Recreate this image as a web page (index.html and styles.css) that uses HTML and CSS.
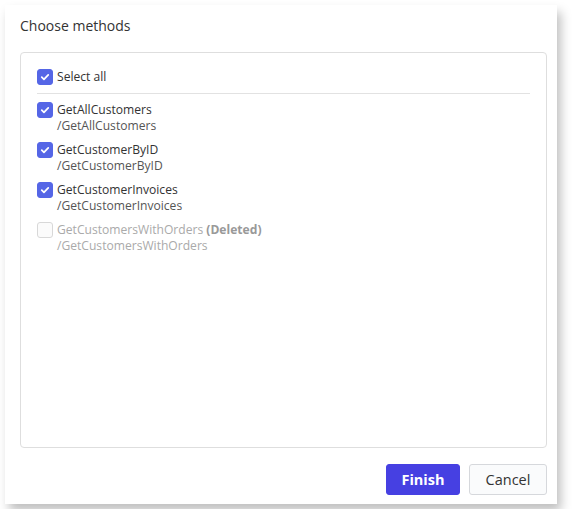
FILE: index.html
```html
<!DOCTYPE html>
<html>
<head>
<meta charset="utf-8">
<link rel="stylesheet" href="styles.css">
</head>
<body>
<div class="dialog">
  <div class="title">Choose methods</div>
  <div class="panel">
    <div class="row select-all">
      <span class="cb checked"><svg viewBox="0 0 16 16"><path d="M4.3 8.2l2.5 2.4 4.9-5" fill="none" stroke="#fff" stroke-width="2" stroke-linecap="round" stroke-linejoin="round"/></svg></span>
      <span class="label">Select all</span>
    </div>
    <div class="sep"></div>
    <div class="row item">
      <span class="cb checked"><svg viewBox="0 0 16 16"><path d="M4.3 8.2l2.5 2.4 4.9-5" fill="none" stroke="#fff" stroke-width="2" stroke-linecap="round" stroke-linejoin="round"/></svg></span>
      <div class="text"><div class="name">GetAllCustomers</div><div class="path">/GetAllCustomers</div></div>
    </div>
    <div class="row item">
      <span class="cb checked"><svg viewBox="0 0 16 16"><path d="M4.3 8.2l2.5 2.4 4.9-5" fill="none" stroke="#fff" stroke-width="2" stroke-linecap="round" stroke-linejoin="round"/></svg></span>
      <div class="text"><div class="name">GetCustomerByID</div><div class="path">/GetCustomerByID</div></div>
    </div>
    <div class="row item">
      <span class="cb checked"><svg viewBox="0 0 16 16"><path d="M4.3 8.2l2.5 2.4 4.9-5" fill="none" stroke="#fff" stroke-width="2" stroke-linecap="round" stroke-linejoin="round"/></svg></span>
      <div class="text"><div class="name">GetCustomerInvoices</div><div class="path">/GetCustomerInvoices</div></div>
    </div>
    <div class="row item disabled">
      <span class="cb"></span>
      <div class="text"><div class="name">GetCustomersWithOrders <b>(Deleted)</b></div><div class="path">/GetCustomersWithOrders</div></div>
    </div>
  </div>
  <div class="footer">
    <button class="btn primary">Finish</button>
    <button class="btn secondary">Cancel</button>
  </div>
</div>
</body>
</html>
```
FILE: styles.css
```css
html, body { margin: 0; padding: 0; background: #fff; }
body { font-family: "Open Sans", "Noto Sans", sans-serif; color: #333; }
.dialog {
  box-sizing: border-box;
  margin: 5px;
  width: 552px;
  height: 499px;
  background: #fff;
  box-shadow: 4px 7px 10px rgba(0,0,0,0.25);
  padding: 12px 10px 8px 15px;
  display: flex;
  flex-direction: column;
}
.title { font-size: 14px; line-height: 18px; color: #333; height: 18px; }
.panel {
  box-sizing: border-box;
  margin-top: 17px;
  height: 396px;
  border: 1px solid #dedede;
  border-radius: 4px;
  padding: 16px 16px 0 16px;
}
.row { display: flex; align-items: flex-start; font-size: 12.1px; line-height: 16px; }
.cb {
  box-sizing: border-box;
  width: 16px; height: 16px;
  border-radius: 3px;
  border: 1px solid #cfd3da;
  background: #fafafa;
  flex: none;
  margin-right: 4px;
  display: block;
}
.cb.checked { background: #5566e6; border-color: #5566e6; }
.cb svg { display: block; width: 14px; height: 14px; }
.select-all .label { color: #333; }
.sep { height: 1px; background: #e2e2e2; margin: 8px 0 8px; }
.item { height: 40px; }
.name { color: #333; }
.path { color: #555; }
.disabled .name, .disabled .path { color: #aaa; }
.disabled b { color: #999; font-weight: 700; }
.disabled .cb { border-color: #d8d8d8; background: #fbfbfb; }
.footer { display: flex; justify-content: flex-end; gap: 9px; margin-top: 16px; }
.btn {
  font-family: "Open Sans", "Noto Sans", sans-serif;
  font-size: 14.5px;
  height: 31px;
  border-radius: 3px;
  box-sizing: border-box;
  cursor: pointer;
}
.primary { width: 74px; background: #4640e2; border: 1px solid #4640e2; color: #fff; font-weight: 700; }
.secondary { width: 78px; background: #fafbfc; border: 1px solid #d6d8dc; color: #333; }
```
